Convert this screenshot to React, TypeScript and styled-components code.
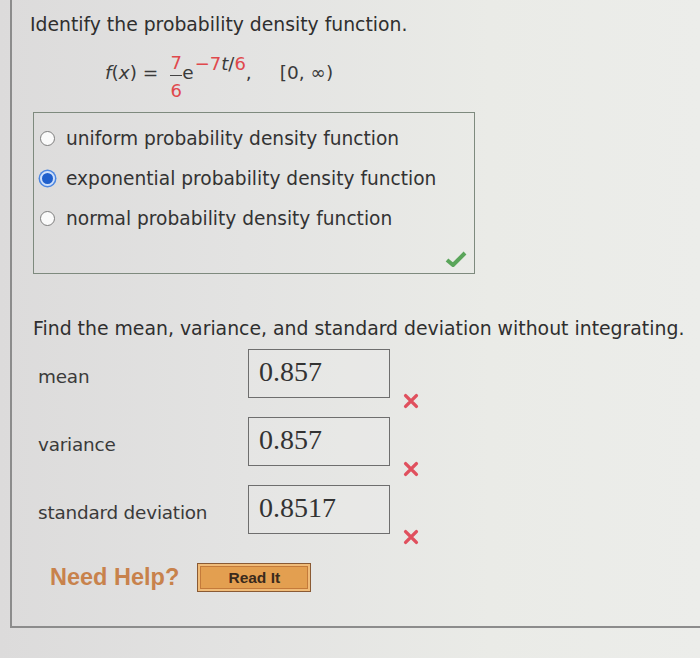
import styled, { createGlobalStyle } from 'styled-components';

const GlobalStyle = createGlobalStyle`
  html, body {
    margin: 0;
    padding: 0;
  }
  body {
    width: 700px;
    height: 658px;
    overflow: hidden;
    background: linear-gradient(90deg, #dcdbdb 0%, #e3e3e2 35%, #eaebe7 70%, #ecedea 100%);
    font-family: 'DejaVu Sans', Verdana, sans-serif;
    color: #333;
  }
`;

const Frame = styled.div`
  margin-left: 10px;
  width: 690px;
  height: 628px;
  box-sizing: border-box;
  border-left: 2px solid #8c8c8c;
  border-bottom: 2px solid #8c8c8c;
  padding: 13px 0 0 18px;
`;

const Title = styled.div`
  font-size: 18.8px;
  color: #2f2f2f;
  line-height: 24px;
`;

const Formula = styled.div`
  display: flex;
  align-items: center;
  margin: 10px 0 0 75px;
  font-size: 18.5px;
  color: #3a3a3a;
  height: 48px;
`;

const Fraction = styled.span`
  display: inline-flex;
  flex-direction: column;
  align-items: center;
  margin: 0 0 0 12px;
  position: relative;
  top: 6px;
  color: #e0484c;
  font-size: 18px;
  line-height: 18px;

  .bar {
    width: 12px;
    height: 1px;
    background: #444;
    margin: 3px 0 6px;
  }
`;

const Base = styled.span`
  position: relative;
  top: 1px;
`;

const Sup = styled.sup`
  font-size: 18px;
  position: relative;
  top: -1px;
  margin-left: 1px;
  vertical-align: super;
  line-height: 0;
`;

const Red = styled.span`
  color: #e0484c;
`;

const Gap = styled.span<{ w: number }>`
  display: inline-block;
  width: ${({ w }) => w}px;
`;

const OptionBox = styled.div`
  margin: 17px 0 0 3px;
  width: 442px;
  height: 162px;
  box-sizing: border-box;
  border: 1px solid #7e8a7e;
  padding: 5px 0 0 6px;
  position: relative;
`;

const Option = styled.label`
  display: flex;
  align-items: center;
  height: 40px;
  font-size: 18.6px;
  color: #333;
  gap: 11px;
`;

const Radio = styled.span<{ checked?: boolean }>`
  width: 15px;
  height: 15px;
  border-radius: 50%;
  box-sizing: border-box;
  flex-shrink: 0;
  background: ${({ checked }) => (checked ? '#1f5fcc' : '#fafafa')};
  border: ${({ checked }) => (checked ? '2px solid #cfe0fb' : '1.5px solid #7d7d7d')};
  box-shadow: ${({ checked }) => (checked ? '0 0 0 1.5px #4c86e0' : 'none')};
`;

const Check = styled.svg`
  position: absolute;
  right: 7px;
  bottom: 5px;
`;

const Prompt = styled.div`
  margin: 43px 0 0 3px;
  font-size: 18.85px;
  color: #2f2f2f;
  line-height: 24px;
`;

const Answers = styled.div`
  margin: 8px 0 0 8px;
  display: flex;
  flex-direction: column;
  gap: 19px;
`;

const AnswerRow = styled.div`
  display: grid;
  grid-template-columns: 210px 142px 40px;
  align-items: center;
`;

const Label = styled.span`
  font-size: 18.4px;
  color: #3a3a3a;
  letter-spacing: -0.2px;
  position: relative;
  top: 3px;
`;

const Input = styled.div`
  height: 49px;
  box-sizing: border-box;
  border: 1px solid #6e6e6e;
  background: rgba(255, 255, 255, 0.08);
  padding: 6px 0 0 10px;
  font-family: 'Liberation Serif', 'DejaVu Serif', serif;
  font-size: 28px;
  color: #333;
`;

const Cross = styled.svg`
  align-self: end;
  margin: 0 0 -12px 12px;
`;

const HelpRow = styled.div`
  display: flex;
  align-items: center;
  margin: 29px 0 0 20px;
  gap: 18px;
`;

const HelpText = styled.span`
  font-family: 'Liberation Sans', Arial, sans-serif;
  font-weight: bold;
  font-size: 23.5px;
  color: #c8824c;
`;

const ReadButton = styled.button`
  width: 114px;
  height: 29px;
  border: 1px solid #8a5a34;
  background: #e39f50;
  box-shadow: inset 0 0 0 2px #f0bb78, inset 0 0 0 3px #c47a3a;
  font-family: 'Liberation Sans', Arial, sans-serif;
  font-weight: bold;
  font-size: 15.5px;
  color: #3a2a1c;
  padding: 0;
`;

const CrossIcon = () => (
  <Cross width="18" height="18" viewBox="0 0 20 20">
    <path d="M4 4 L16 16 M16 4 L4 16" stroke="#e0505e" strokeWidth="3.8" strokeLinecap="round" />
  </Cross>
);

const answers = [
  { label: 'mean', value: '0.857' },
  { label: 'variance', value: '0.857' },
  { label: 'standard deviation', value: '0.8517' },
];

const options = [
  { text: 'uniform probability density function', checked: false },
  { text: 'exponential probability density function', checked: true },
  { text: 'normal probability density function', checked: false },
];

export default function App() {
  return (
    <>
      <GlobalStyle />
      <Frame>
        <Title>Identify the probability density function.</Title>
        <Formula>
          <Base>
            <i>f</i>(<i>x</i>) =
          </Base>
          <Fraction>
            <span>7</span>
            <span className="bar" />
            <span>6</span>
          </Fraction>
          <Base>
            e
            <Sup>
              <Red>−7</Red>
              <i>t</i>/<Red>6</Red>
            </Sup>
            ,
          </Base>
          <Gap w={28} />
          <Base>[0, ∞)</Base>
        </Formula>
        <OptionBox>
          {options.map((o) => (
            <Option key={o.text}>
              <Radio checked={o.checked} />
              {o.text}
            </Option>
          ))}
          <Check width="22" height="18" viewBox="0 0 22 18">
            <path d="M2 10 L8 15 L20 3" fill="none" stroke="#5aa55a" strokeWidth="4" strokeLinejoin="round" />
          </Check>
        </OptionBox>
        <Prompt>Find the mean, variance, and standard deviation without integrating.</Prompt>
        <Answers>
          {answers.map((a) => (
            <AnswerRow key={a.label}>
              <Label>{a.label}</Label>
              <Input>{a.value}</Input>
              <CrossIcon />
            </AnswerRow>
          ))}
        </Answers>
        <HelpRow>
          <HelpText>Need Help?</HelpText>
          <ReadButton>Read It</ReadButton>
        </HelpRow>
      </Frame>
    </>
  );
}
